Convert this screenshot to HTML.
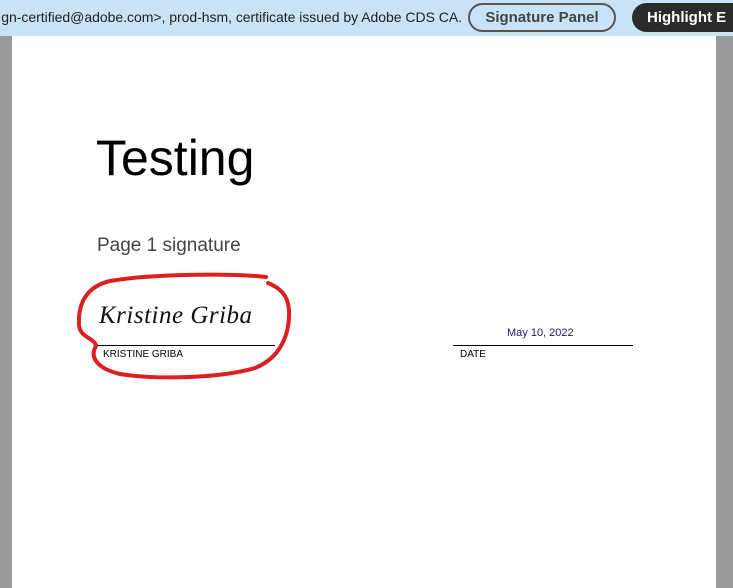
<!DOCTYPE html>
<html><head><style>
body{margin:0;width:733px;height:588px;overflow:hidden;background:#fff;font-family:"Liberation Sans",sans-serif;position:relative}
.bar{position:absolute;left:0;top:0;width:733px;height:36px;background:#c8e2f6;overflow:hidden}
.msg{position:absolute;right:271px;top:9px;font-size:14px;color:#222;white-space:nowrap;letter-spacing:-0.03px}
.b1{position:absolute;left:468px;top:3px;width:144px;height:25px;border:2px solid #555;border-radius:15px;font-size:15px;color:#444;text-align:center;line-height:25px;font-weight:bold}
.b2{position:absolute;left:632px;top:3px;width:140px;height:29px;background:#2b2b2b;border-radius:15px;color:#fff;font-size:15px;font-weight:bold;line-height:29px;padding-left:15px;box-sizing:border-box}
.gl{position:absolute;left:0;top:36px;width:12px;height:552px;background:#9a9a9a}
.gr{position:absolute;left:716px;top:36px;width:17px;height:552px;background:#9a9a9a}
.t{position:absolute;left:96px;top:129px;font-size:50px;color:#000}
.p{position:absolute;left:97px;top:235px;font-size:19px;color:#444}
.sig{position:absolute;left:99px;top:302px;font-family:"Liberation Serif",serif;font-style:italic;font-size:25px;color:#111;letter-spacing:0.5px}
.l1{position:absolute;left:95px;top:345px;width:180px;height:1px;background:#000}
.l2{position:absolute;left:453px;top:345px;width:180px;height:1px;background:#000}
.s{position:absolute;font-size:10px;color:#000}
</style></head><body>
<div class="bar"><div class="msg">gn-certified@adobe.com&gt;, prod-hsm, certificate issued by Adobe CDS CA.</div>
<div class="b1">Signature Panel</div><div class="b2">Highlight E</div></div>
<div class="gl"></div><div class="gr"></div>
<div class="t">Testing</div>
<div class="p">Page 1 signature</div>
<div class="sig">Kristine Griba</div>
<div class="l1"></div><div class="l2"></div>
<div class="s" style="left:103px;top:349px">KRISTINE GRIBA</div>
<div class="s" style="left:460px;top:349px">DATE</div>
<div class="s" style="left:507px;top:327px;color:#1a1a6e;font-size:11px">May 10, 2022</div>
<svg style="position:absolute;left:0;top:0" width="733" height="588"><path d="M266 277 C230 273 150 274 110 281 C85 287 78 305 79 325 C80 338 95 338 96 346 C90 356 95 368 120 374 C160 380 220 378 255 368 C280 358 290 335 289 310 C288 295 280 288 268 283" fill="none" stroke="#dd1f1f" stroke-width="4" stroke-linecap="round"/></svg>
</body></html>
